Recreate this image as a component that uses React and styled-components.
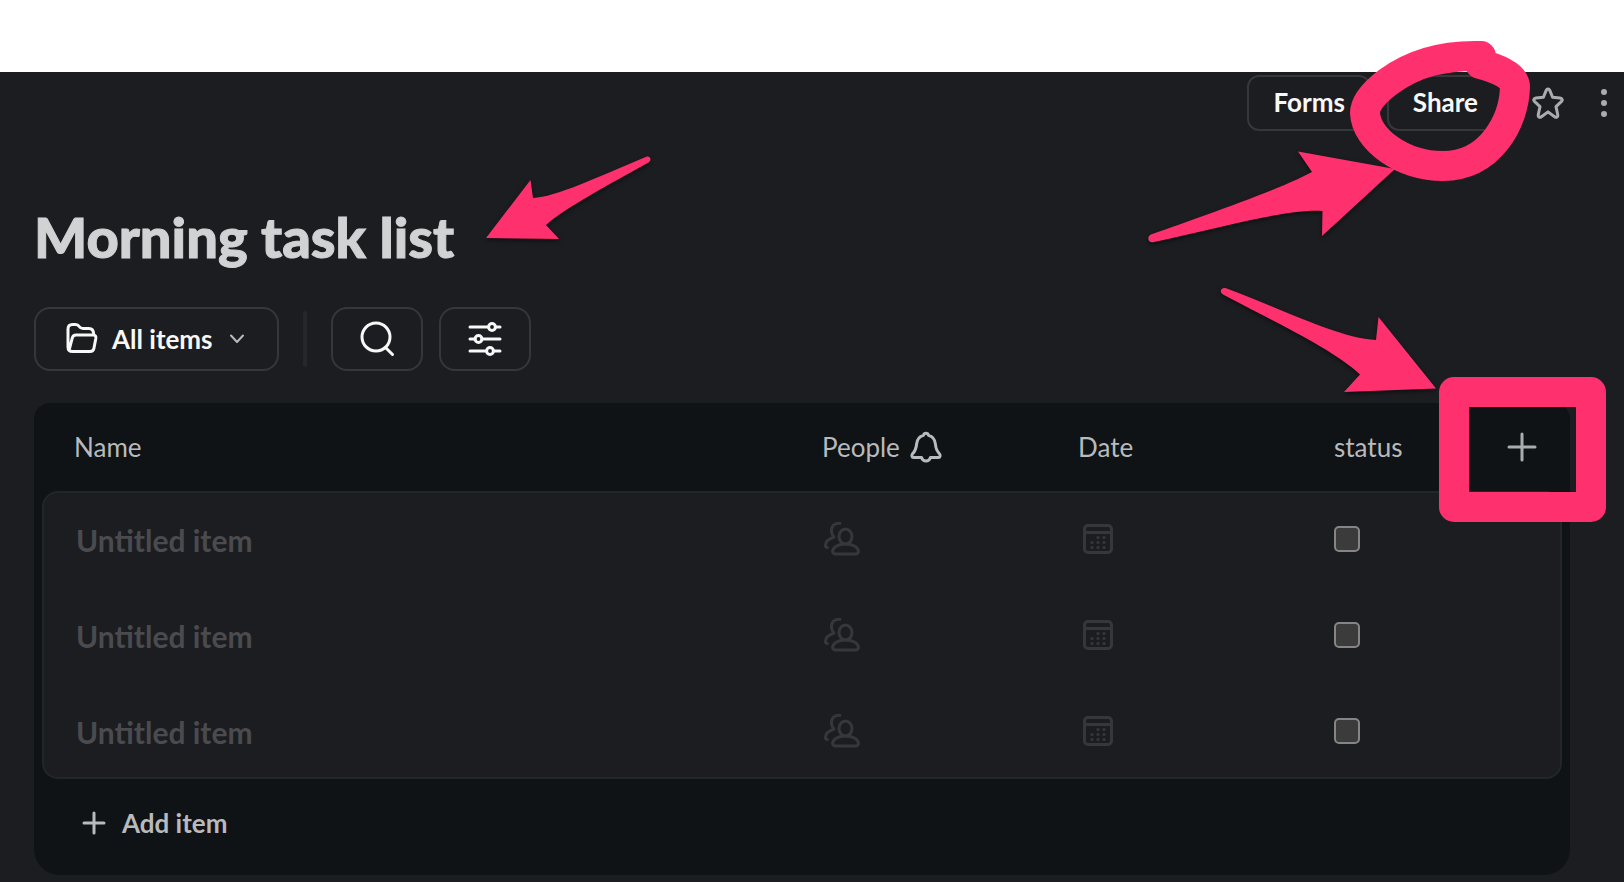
import React from "react";
import styled, { createGlobalStyle } from "styled-components";

const GlobalStyle = createGlobalStyle`
  *, *::before, *::after { box-sizing: border-box; }
  html { background: #1c1d21; }
  body {
    margin: 0;
    font-family: Lato, "Liberation Sans", sans-serif;
    font-size: 26px;
    line-height: 32px;
    color: #f8f8f8;
    background: #1c1d21;
  }
  button { font: inherit; color: inherit; background: none; border: 0; padding: 0; cursor: pointer; }
  svg { display: block; flex: none; }
`;

const Page = styled.div`
  position: relative;
  min-height: 100vh;
  overflow: hidden;
`;

const TopStrip = styled.div`
  height: 72px;
  background: #ffffff;
`;

const ActionBar = styled.header`
  display: flex;
  justify-content: flex-end;
  align-items: center;
  gap: 16px;
  padding: 3px 4px 0 32px;
`;

const ActionButton = styled.button`
  height: 56px;
  padding: 0 24px 2px;
  border: 2px solid #35373b;
  border-radius: 12px;
  font-weight: 700;
`;

const IconButton = styled.button`
  display: flex;
  align-items: center;
  justify-content: center;
  width: ${(p) => p.$width || 32}px;
  height: 56px;
  color: #abacae;
`;

const StarButton = styled(IconButton)`
  margin: 0 8px 0 12px;
`;

const Main = styled.main`
  padding: 70px 54px 7px 34px;
`;

const Title = styled.h1`
  margin: 0;
  font-size: 56px;
  line-height: 72px;
  font-weight: 900;
  color: #d1d2d3;
  -webkit-text-stroke: 1px #d1d2d3;
`;

const Toolbar = styled.div`
  display: flex;
  align-items: center;
  gap: 16px;
  margin: 34px 0 32px;
`;

const ToolButton = styled.button`
  display: flex;
  align-items: center;
  justify-content: center;
  gap: 14px;
  height: 64px;
  width: ${(p) => (p.$square ? "92px" : "auto")};
  padding: ${(p) => (p.$square ? "0" : "0 32px 0 30px")};
  border: 2px solid #35373b;
  border-radius: 16px;
  font-weight: 700;
`;

const ToolLabel = styled.span`
  margin-right: 2px;
`;

const Divider = styled.span`
  width: 4px;
  height: 56px;
  margin: 0 8px;
  border-radius: 2px;
  background: #25282b;
`;

const ListCard = styled.section`
  padding: 0 8px;
  border-radius: 16px 16px 26px 26px;
  background: #0f1316;
`;

const Table = styled.table`
  width: 100%;
  table-layout: fixed;
  border-collapse: separate;
  border-spacing: 0;
`;

const Column = styled.col`
  width: ${(p) => (p.$width ? `${p.$width}px` : "auto")};
`;

const HeadCell = styled.th`
  height: 88px;
  padding: 0 ${(p) => (p.$action ? 0 : 32)}px;
  text-align: left;
  font-weight: 400;
  color: #b9babd;
`;

const HeadLabel = styled.span`
  display: flex;
  align-items: center;
  gap: 10px;
`;

const Cell = styled.td`
  height: 96px;
  padding: 0 32px;
  background: #1c1d21;
  border: 0 solid #222529;
  color: #35383b;

  &:first-child { border-left-width: 2px; }
  &:last-child { border-right-width: 2px; }
  tr:first-child > & { border-top-width: 2px; padding-bottom: 2px; }
  tr:last-child > & { border-bottom-width: 2px; padding-top: 2px; }
  tr:first-child > &:first-child { border-top-left-radius: 16px; }
  tr:first-child > &:last-child { border-top-right-radius: 16px; }
  tr:last-child > &:first-child { border-bottom-left-radius: 16px; }
  tr:last-child > &:last-child { border-bottom-right-radius: 16px; }
`;

const ItemName = styled.span`
  display: block;
  padding-top: 2px;
  font-size: 30px;
  font-weight: 700;
  color: #4a4b4e;
`;

const Checkbox = styled.input`
  appearance: none;
  display: block;
  width: 26px;
  height: 26px;
  margin: 0;
  border: 2px solid #858585;
  border-radius: 5px;
  background: #3b3b3b;

  &:checked { background: #858585; }
`;

const AddItemButton = styled.button`
  display: flex;
  align-items: center;
  gap: 16px;
  height: 96px;
  padding: 0 40px 8px;
  font-weight: 700;
  color: #b9babd;
`;

const Markup = styled.svg`
  position: absolute;
  top: 0;
  ${(p) => p.$side}: 0;
  pointer-events: none;
`;

const Arrow = styled.path`
  fill: #ff306e;
  filter: drop-shadow(0 2px 2px rgba(0, 0, 0, 0.5));
`;

const Outline = styled.path`
  fill: none;
  stroke: #ff306e;
  stroke-width: 30;
  stroke-linecap: round;
  stroke-linejoin: round;
`;

function Icon({ size, stroke = 3, color = "currentColor", children }) {
  return (
    <svg
      width={size}
      height={size}
      viewBox={`0 0 ${size} ${size}`}
      fill="none"
      stroke={color}
      strokeWidth={stroke}
      strokeLinecap="round"
      strokeLinejoin="round"
      aria-hidden="true"
    >
      {children}
    </svg>
  );
}

const StarIcon = () => (
  <Icon size={32}>
    <path d="M14.2 3.400C15 1.500 17 1.500 17.800 3.400L20.600 10.200L28 11C30.300 11.300 30.900 13.300 29.300 14.700L24 19.600L25.700 27.500C26.200 29.900 24.400 31 22.600 29.700L16 24.900L9.400 29.700C7.600 31 5.800 29.900 6.300 27.500L8 19.600L2.700 14.700C1.100 13.300 1.700 11.300 4 11L11.400 10.200Z" />
  </Icon>
);

const MoreIcon = () => (
  <Icon size={32}>
    <g fill="currentColor" stroke="none">
      <circle cx="16" cy="5" r="3" />
      <circle cx="16" cy="16" r="3" />
      <circle cx="16" cy="27" r="3" />
    </g>
  </Icon>
);

const FolderIcon = () => (
  <Icon size={32}>
    <path d="M2 24V6Q2 1.500 6.500 1.500H9.500Q12 1.500 13.200 3.500Q14.500 5.500 17 5.500H23Q27.500 5.500 27.800 11.500M2 24C2 27 3.500 28.500 6.500 28.500H24Q27.300 28.500 27.900 25.500L29.800 15.500Q30.300 12 27.300 12H10Q7 12 6.300 14.800L3.300 26.500" />
  </Icon>
);

const ChevronIcon = () => (
  <Icon size={16} stroke={2} color="#b9babd">
    <path d="M2 4.5L8 11L14 4.5" />
  </Icon>
);

const SearchIcon = () => (
  <Icon size={36}>
    <circle cx="17" cy="16" r="14" />
    <path d="M26.5 26.5L33.5 33.5" />
  </Icon>
);

const FilterIcon = () => (
  <Icon size={36}>
    <path d="M3 6H21.5M28.5 6H33M3 18H8M15 18H33M3 30H19.5M26.500 30H33" />
    <circle cx="25" cy="6" r="3.4" />
    <circle cx="11.5" cy="18" r="3.4" />
    <circle cx="23" cy="30" r="3.4" />
  </Icon>
);

const BellIcon = () => (
  <Icon size={32}>
    <path d="M16 2.2C14.3 2.2 13.8 3 13.4 4.4C9 5.6 7 8.6 6.6 13C6.2 18 5.6 19.6 2.6 22.8C1.4 24.2 1.7 26.6 3.6 26.6H11.6C12.3 29 13.8 30 16 30C18.2 30 19.7 29 20.4 26.6H28.4C30.3 26.6 30.6 24.2 29.4 22.8C26.4 19.6 25.8 18 25.4 13C25 8.6 23 5.6 18.6 4.4C18.2 3 17.7 2.2 16 2.2Z" />
  </Icon>
);

const PlusIcon = ({ size }) => (
  <Icon size={size}>
    <path d={`M${size / 2} 2V${size - 2}M2 ${size / 2}H${size - 2}`} />
  </Icon>
);

const PeopleIcon = () => (
  <Icon size={40}>
    <path d="M18 4.400C12 3.600 8.600 8 9.600 13.600C9.900 15.400 10.600 16.600 12 18.200C6 20 3.400 23 3.400 26.600C3.400 27.800 4.200 28.400 5.400 28.400" />
    <ellipse cx="23.5" cy="17.5" rx="6.5" ry="7.5" />
    <path d="M23.5 25C15.5 25 11 28.6 10.6 32C10.5 34 11.8 35 13.4 35H33.6C35.2 35 36.5 34 36.4 32C36 28.6 31.5 25 23.5 25Z" />
  </Icon>
);

const CalendarIcon = () => (
  <Icon size={40}>
    <rect x="6.5" y="6.5" width="27" height="27" rx="3.5" />
    <path d="M7 13.5H33" />
    <g fill="currentColor" stroke="none">
      {[[20, 18.5], [26, 18.5], [14, 23.5], [20, 23.5], [26, 23.5], [14, 28.5], [20, 28.5], [26, 28.5]].map(([x, y]) => (
        <circle key={`${x}-${y}`} cx={x} cy={y} r="1.6" />
      ))}
    </g>
  </Icon>
);

const items = [1, 2, 3];

export default function App() {
  return (
    <Page>
      <GlobalStyle />
      <TopStrip />
      <ActionBar>
        <ActionButton type="button">Forms</ActionButton>
        <ActionButton type="button">Share</ActionButton>
        <StarButton type="button" aria-label="Add to favourites">
          <StarIcon />
        </StarButton>
        <IconButton type="button" aria-label="More actions">
          <MoreIcon />
        </IconButton>
      </ActionBar>
      <Main>
        <Title>Morning task list</Title>
        <Toolbar>
          <ToolButton type="button">
            <FolderIcon />
            <ToolLabel>All items</ToolLabel>
            <ChevronIcon />
          </ToolButton>
          <Divider />
          <ToolButton type="button" $square aria-label="Search">
            <SearchIcon />
          </ToolButton>
          <ToolButton type="button" $square aria-label="Filter">
            <FilterIcon />
          </ToolButton>
        </Toolbar>
        <ListCard>
          <Table>
            <colgroup>
              <Column />
              <Column $width={256} />
              <Column $width={256} />
              <Column $width={180} />
              <Column $width={80} />
            </colgroup>
            <thead>
              <tr>
                <HeadCell scope="col">Name</HeadCell>
                <HeadCell scope="col">
                  <HeadLabel>
                    People
                    <BellIcon />
                  </HeadLabel>
                </HeadCell>
                <HeadCell scope="col">Date</HeadCell>
                <HeadCell scope="col">status</HeadCell>
                <HeadCell $action>
                  <IconButton type="button" $width={80} aria-label="Add field">
                    <PlusIcon size={30} />
                  </IconButton>
                </HeadCell>
              </tr>
            </thead>
            <tbody>
              {items.map((item) => (
                <tr key={item}>
                  <Cell>
                    <ItemName>Untitled item</ItemName>
                  </Cell>
                  <Cell>
                    <PeopleIcon />
                  </Cell>
                  <Cell>
                    <CalendarIcon />
                  </Cell>
                  <Cell>
                    <Checkbox type="checkbox" aria-label={`Status of item ${item}`} />
                  </Cell>
                  <Cell />
                </tr>
              ))}
            </tbody>
          </Table>
          <AddItemButton type="button">
            <PlusIcon size={24} />
            Add item
          </AddItemButton>
        </ListCard>
      </Main>
      <Markup $side="left" width="700" height="300" viewBox="0 0 700 300" aria-hidden="true">
        <Arrow d="M486 238L530.500 180L533 198C556 197 595 178 647 156.500C650.500 156 652 160 648.500 162.500C610 184 565 208 546 225L559 239Z" />
      </Markup>
      <Markup $side="right" width="500" height="560" viewBox="1124 0 500 560" aria-hidden="true">
        <Arrow d="M1151 234.500C1200 217 1281 189 1312 172L1298 151.500L1395 169L1322 236L1322.500 211C1285 209 1215 229 1153 242.200C1148 243 1146.500 236.500 1151 234.500Z" />
        <Arrow d="M1226 288.200C1275 306 1340 339 1376 340L1378.500 317L1436 388.500L1344 392L1360 374.500C1335 351 1285 327 1223 294.500C1218.500 291.500 1221.500 286.800 1226 288.200Z" />
        <Outline d="M1481 56C1445 55 1415 62 1388 82C1372 94 1365 104 1365 113C1366 139 1402 166 1443 166C1490 166 1514 122 1515 87C1515 77 1500 69 1480 64" />
        <Outline d="M1454 392H1591V507H1454Z" />
      </Markup>
    </Page>
  );
}
